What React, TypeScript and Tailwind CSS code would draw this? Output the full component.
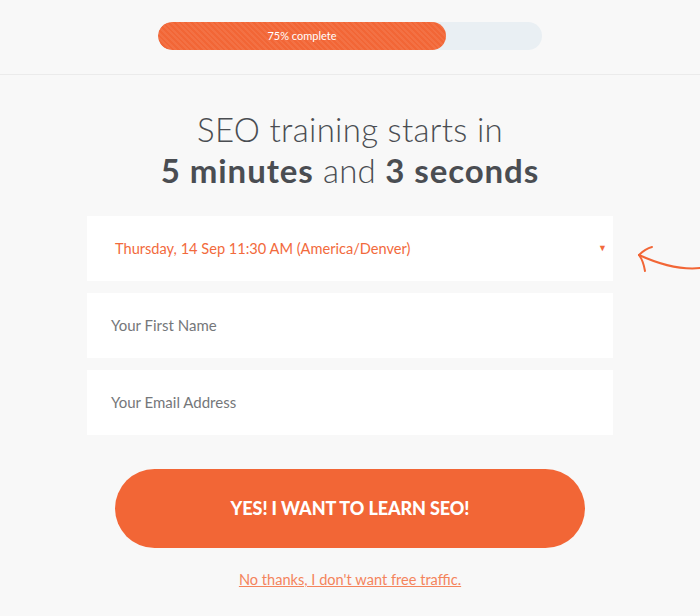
import React from "react";

export default function App() {
  return (
    <div className="w-[700px] h-[616px] bg-[#f8f8f8] overflow-hidden" style={{ fontFamily: "Lato, 'Open Sans', sans-serif" }}>
      <div className="h-[75px] border-b border-[#ebebeb] flex justify-center pt-[22px]">
        <div className="w-[384px] h-[28px] rounded-full bg-[#e9eff3] flex overflow-hidden">
          <div className="w-[288px] h-full rounded-full bg-[#f26636] bg-[repeating-linear-gradient(45deg,rgba(255,255,255,0.07)_0px,rgba(255,255,255,0.07)_2px,transparent_2px,transparent_4px)] flex items-center justify-center text-white text-[11px]">
            75% complete
          </div>
        </div>
      </div>
      <div className="flex flex-col items-center">
        <h1 className="mt-[34px] text-center text-[#4a4d52] text-[33px] leading-[41px]">
          <div className="font-light tracking-[0.3px]">SEO training starts in</div>
          <div className="font-light tracking-[0.3px]">
            <span className="font-bold tracking-[0.9px]">5 minutes</span> and <span className="font-bold tracking-[0.9px]">3 seconds</span>
          </div>
        </h1>
        <div className="relative mt-[25px] w-[526px] flex flex-col gap-[12px]">
          <div className="h-[65px] bg-white flex items-center justify-between pl-[28px] pr-[6px] text-[#f26a3c] text-[14.6px]">
            <span>Thursday, 14 Sep 11:30 AM (America/Denver)</span>
            <span className="text-[9px] -mt-[2px]">▼</span>
          </div>
          <svg className="absolute left-[546px] top-[20px]" width="70" height="40" viewBox="0 0 70 40" fill="none" stroke="#f26636" strokeWidth="2" strokeLinecap="round">
            <path d="M68 32 C 50 34, 30 30, 6 19" />
            <path d="M6 19 C 10 15, 15 12, 19 11" />
            <path d="M6 19 C 9 23, 11 29, 12 35" />
          </svg>
          <div className="h-[65px] bg-white flex items-center pl-[24px] text-[#75777a] text-[15px]">Your First Name</div>
          <div className="h-[65px] bg-white flex items-center pl-[24px] text-[#75777a] text-[15px]">Your Email Address</div>
        </div>
        <button className="mt-[34px] w-[470px] h-[79px] rounded-full bg-[#f26636] text-white font-black text-[18px] tracking-[-0.1px]">
          YES! I WANT TO LEARN SEO!
        </button>
        <a className="mt-[21px] text-[#f4845c] underline text-[14.6px]">No thanks, I don't want free traffic.</a>
      </div>
    </div>
  );
}
